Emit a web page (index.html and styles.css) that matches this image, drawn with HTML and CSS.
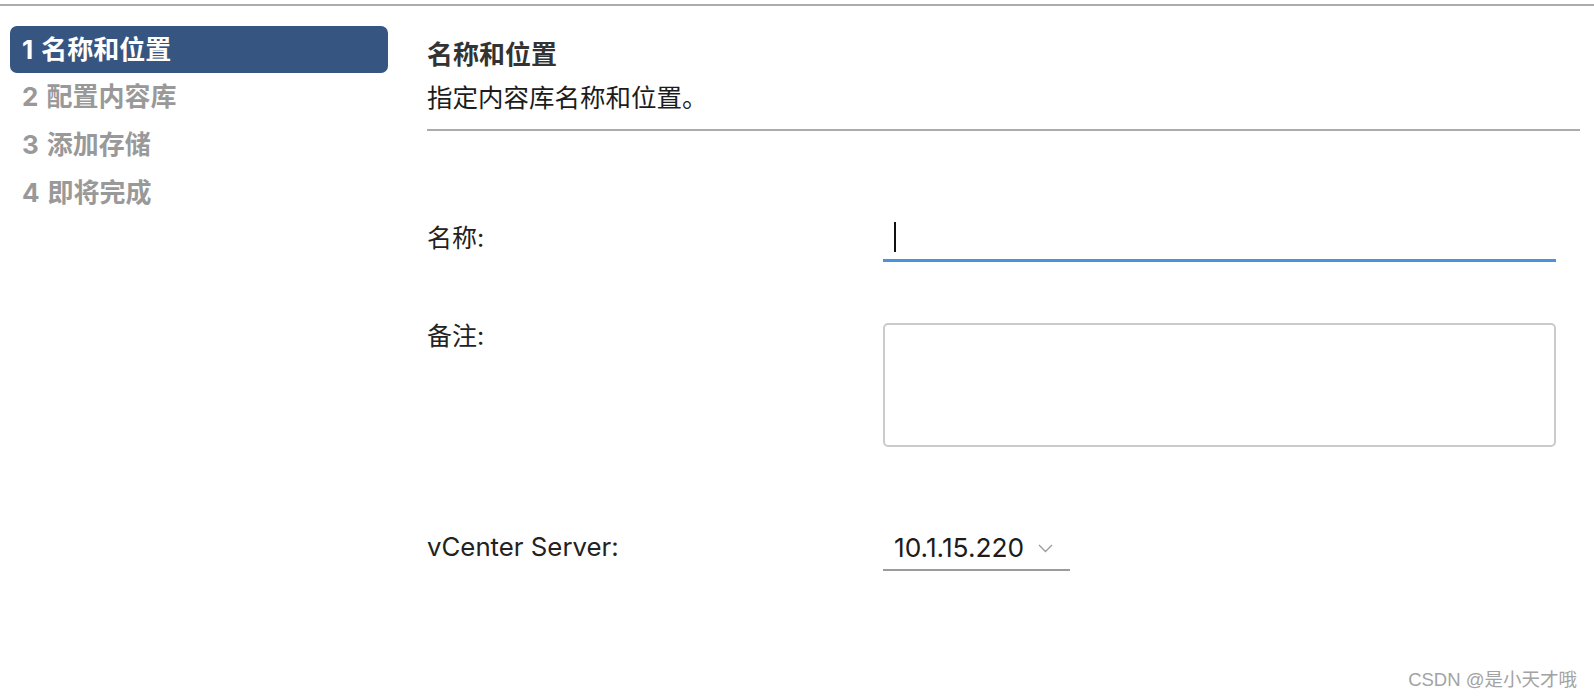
FILE: index.html
```html
<!DOCTYPE html>
<html lang="zh-CN">
<head>
<meta charset="utf-8">
<title>新建内容库</title>
<link rel="stylesheet" href="styles.css">
</head>
<body>
<div class="topline"></div>
<div class="wizard">
  <nav class="steps">
    <div class="step active"><span class="num">1</span>名称和位置</div>
    <div class="step"><span class="num">2</span>配置内容库</div>
    <div class="step"><span class="num">3</span>添加存储</div>
    <div class="step"><span class="num">4</span>即将完成</div>
  </nav>
  <main class="content">
    <header class="page-head">
      <h2 class="title">名称和位置</h2>
      <p class="subtitle">指定内容库名称和位置。</p>
    </header>
    <form class="form">
      <div class="row row-name">
        <label class="label">名称:</label>
        <div class="text-input"><span class="caret"></span></div>
      </div>
      <div class="row row-note">
        <label class="label label-top">备注:</label>
        <div class="textarea"></div>
      </div>
      <div class="row row-server">
        <label class="label latin">vCenter Server:</label>
        <div class="select">
          <span class="select-value">10.1.15.220</span>
          <svg class="chevron" width="15" height="9" viewBox="0 0 15 9"><polyline points="1,1 7.5,7.5 14,1" fill="none" stroke="#9a9a9a" stroke-width="1.3"/></svg>
        </div>
      </div>
    </form>
  </main>
</div>
<div class="watermark">CSDN @是小天才哦</div>
</body>
</html>
```
FILE: styles.css
```css
* { box-sizing: border-box; }
html, body { margin: 0; padding: 0; background: #fff; }
body {
  width: 1594px;
  height: 700px;
  position: relative;
  overflow: hidden;
  font-family: Inter, "Noto Sans CJK SC", sans-serif;
  color: #222;
}
.topline {
  margin-top: 4px;
  height: 2px;
  background: #acacac;
}
.wizard {
  display: flex;
}
.steps {
  width: 378px;
  margin-left: 10px;
  padding-top: 20px;
  flex: none;
}
.step {
  height: 48px;
  line-height: 48px;
  padding-left: 12px;
  font-size: 26px;
  font-weight: 700;
  color: #999;
  border-radius: 7px;
}
.step .num {
  display: inline-block;
  margin-right: 8px;
}
.step.active {
  height: 47px;
  line-height: 47px;
  background: #375581;
  color: #fff;
}
.content {
  flex: 1;
  margin-left: 39px;
  padding-right: 14px;
}
.page-head {
  padding-top: 34px;
  border-bottom: 2px solid #acacac;
  padding-bottom: 16px;
}
.title {
  margin: 0;
  font-size: 26px;
  line-height: 30px;
  font-weight: 700;
  color: #333;
}
.subtitle {
  margin: 13px 0 0;
  font-size: 25.5px;
  line-height: 30px;
  color: #1c1c1c;
}
.form {
  width: 1129px;
  padding-top: 84px;
}
.row {
  display: grid;
  grid-template-columns: 456px 673px;
  align-items: start;
}
.label {
  font-size: 25px;
  line-height: 47px;
  color: #222;
}
.latin { font-size: 25.8px; }
.text-input {
  height: 47px;
  border-bottom: 3px solid #4794d8;
  display: flex;
  align-items: center;
  padding-left: 11px;
}
.caret {
  width: 2px;
  height: 30px;
  background: #111;
}
.row-note { margin-top: 59px; }
.label-top { line-height: 30px; }
.textarea {
  margin-top: 2px;
  height: 124px;
  border: 2px solid #cbcbcb;
  border-radius: 5px;
}
.row-server { margin-top: 78px; }
.row-server .label { line-height: 44px; }
.select {
  justify-self: start;
  height: 46px;
  display: flex;
  align-items: center;
  padding: 0 17px 0 11px;
  gap: 14px;
  border-bottom: 2px solid #9c9c9c;
}
.select-value {
  font-size: 26.3px;
  color: #1c1c1c;
}
.chevron { display: block; margin-top: 2px; }
.watermark {
  position: absolute;
  right: 17px;
  top: 669px;
  font-family: "Liberation Sans", "Noto Sans CJK SC", sans-serif;
  font-size: 18.5px;
  line-height: 22px;
  color: #a3a3a3;
}
```
